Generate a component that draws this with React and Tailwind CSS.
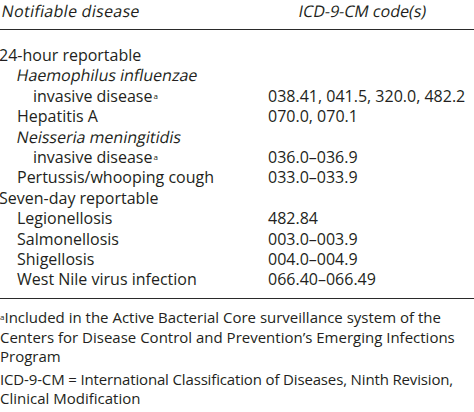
import React from 'react';

const rows = [
    { label: '24-hour reportable', level: 0 },
    { label: 'Haemophilus influenzae', level: 1, italic: true },
    { label: 'invasive disease', level: 2, sup: true, code: '038.41, 041.5, 320.0, 482.2' },
    { label: 'Hepatitis A', level: 1, code: '070.0, 070.1' },
    { label: 'Neisseria meningitidis', level: 1, italic: true },
    { label: 'invasive disease', level: 2, sup: true, code: '036.0–036.9' },
    { label: 'Pertussis/whooping cough', level: 1, code: '033.0–033.9' },
    { label: 'Seven-day reportable', level: 0 },
    { label: 'Legionellosis', level: 1, code: '482.84' },
    { label: 'Salmonellosis', level: 1, code: '003.0–003.9' },
    { label: 'Shigellosis', level: 1, code: '004.0–004.9' },
    { label: 'West Nile virus infection', level: 1, code: '066.40–066.49' },
];

const indent = ['pl-0', 'pl-[17px]', 'pl-[33px]'];

// the source face is an oblique, so slant the roman instead of using the italic
function Oblique({ children }) {
    return <span className="inline-block -skew-x-[11deg]">{children}</span>;
}

function Sup() {
    return <sup className="text-[8px] relative -top-[3px] ml-[1px]">a</sup>;
}

export default function App() {
    return (
        <div className="w-[474px] h-[412px] bg-white text-[#231f20] overflow-hidden font-['Open_Sans','Noto_Sans',sans-serif] text-[16px] leading-[20.4px]">
            {/* header */}
            <div className="grid grid-cols-[267px_1fr] h-[28.5px]">
                <div className="pl-[2px] pt-[1px] tracking-[0.3px]"><Oblique>Notifiable disease</Oblique></div>
                <div className="pl-[32px] pt-[1px]"><Oblique>ICD-9-CM code(s)</Oblique></div>
            </div>
            <div className="h-[1.5px] bg-[#2a2a2a]" />

            {/* body */}
            <div className="pt-[15px] pb-[8px]">
                {rows.map((r, i) => (
                    <div key={i} className="grid grid-cols-[267px_1fr]">
                        <div className={`${indent[r.level]} ${r.level === 0 ? '-ml-[1px]' : ''} whitespace-nowrap`}>
                            {r.italic ? <Oblique>{r.label}</Oblique> : r.label}
                            {r.sup && <Sup />}
                        </div>
                        <div className="pl-[1px] whitespace-nowrap">{r.code}</div>
                    </div>
                ))}
            </div>
            <div className="h-[1.5px] bg-[#2a2a2a]" />

            {/* footnotes */}
            <div className="pt-[9px] text-[15px] leading-[19.5px]">
                <p className="whitespace-nowrap">
                    <sup className="text-[8px] relative -top-[3px]">a</sup>Included in the Active Bacterial Core surveillance system of the<br />
                    Centers for Disease Control and Prevention’s Emerging Infections<br />
                    Program
                </p>
                <p className="mt-[3px] whitespace-nowrap tracking-[-0.15px]">
                    ICD-9-CM = International Classification of Diseases, Ninth Revision,<br />
                    <span className="tracking-normal">Clinical Modification</span>
                </p>
            </div>
        </div>
    );
}
